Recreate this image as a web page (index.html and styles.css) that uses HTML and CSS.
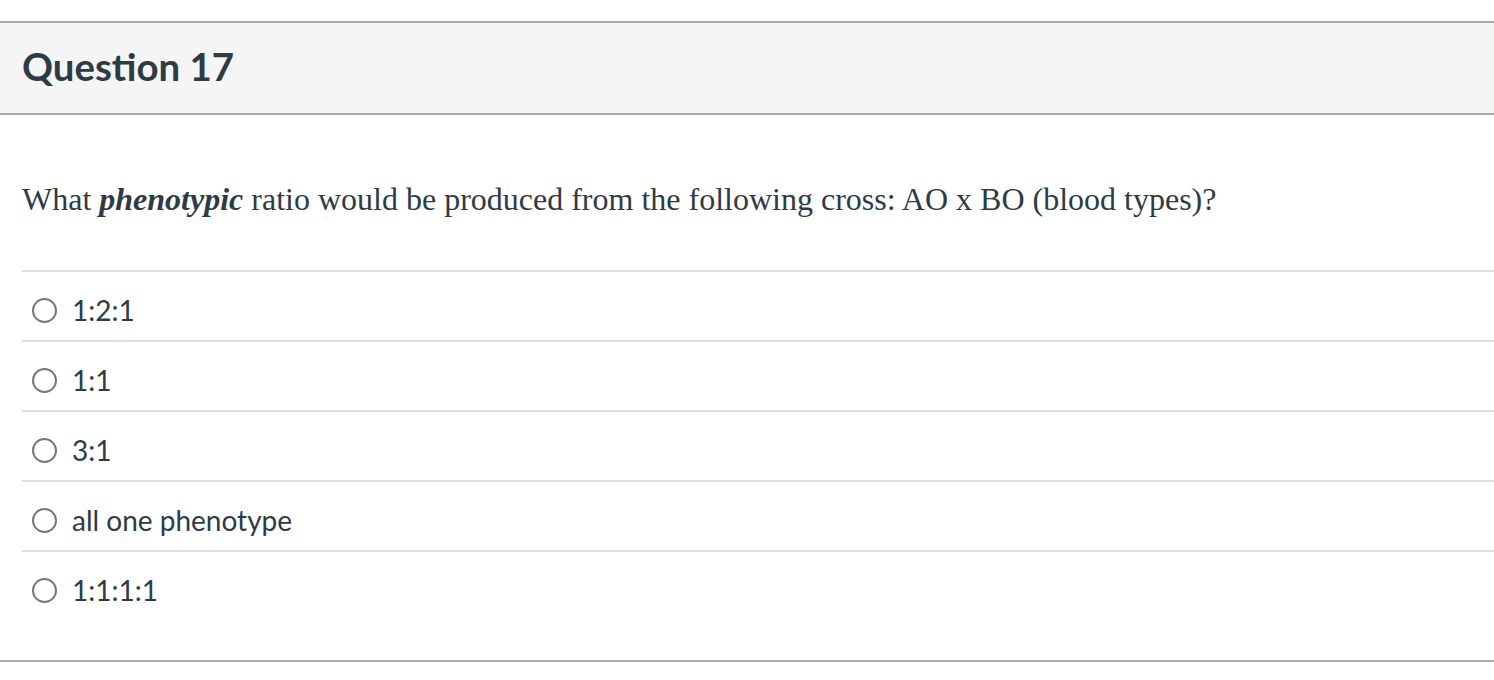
FILE: index.html
```html
<!DOCTYPE html>
<html>
<head>
<meta charset="utf-8">
<link rel="stylesheet" href="styles.css">
</head>
<body>
<div class="question">
  <div class="header"><h2 class="title">Question 17</h2></div>
  <div class="body">
    <p class="qtext">What <strong><em>phenotypic</em></strong> ratio would be produced from the following cross: AO x BO (blood types)?</p>
    <div class="answers">
      <label class="answer"><span class="radio"></span><span class="atext">1:2:1</span></label>
      <label class="answer"><span class="radio"></span><span class="atext">1:1</span></label>
      <label class="answer"><span class="radio"></span><span class="atext">3:1</span></label>
      <label class="answer"><span class="radio"></span><span class="atext">all one phenotype</span></label>
      <label class="answer"><span class="radio"></span><span class="atext">1:1:1:1</span></label>
    </div>
  </div>
</div>
</body>
</html>
```
FILE: styles.css
```css
html, body {
  margin: 0;
  padding: 0;
  background: #fff;
}
body {
  font-family: Lato, "Liberation Sans", sans-serif;
  color: #2d3b45;
}
.question {
  margin-top: 21px;
  border-top: 2px solid #aaaaaa;
  border-bottom: 2px solid #aaaaaa;
}
.header {
  height: 87px;
  background: #f5f5f5;
  border-bottom: 2px solid #aaaaaa;
  padding: 0 0 3px 22px;
  display: flex;
  align-items: center;
}
.title {
  margin: 0;
  font-family: Lato, sans-serif;
  font-weight: 700;
  font-size: 38.4px;
  line-height: 1;
  color: #2d3b45;
}
.body {
  padding: 0 0 40px 22px;
}
.qtext {
  margin: 0;
  height: 155px;
  box-sizing: border-box;
  padding-top: 64px;
  font-family: "Liberation Serif", "Times New Roman", serif;
  font-size: 32px;
  line-height: 40px;
  color: #2d3b45;
}
.answers {
  display: flex;
  flex-direction: column;
}
.answer {
  height: 70px;
  box-sizing: border-box;
  border-top: 2px solid #dddddd;
  display: flex;
  align-items: center;
  padding: 7px 0 0 10px;
  gap: 15px;
}
.radio {
  width: 25px;
  height: 25px;
  box-sizing: border-box;
  border: 2px solid #777777;
  border-radius: 50%;
  background: #fff;
  flex: none;
  margin-top: 2px;
}
.atext {
  font-family: Lato, sans-serif;
  font-size: 28px;
  line-height: 30px;
  color: #2d3b45;
}
```
